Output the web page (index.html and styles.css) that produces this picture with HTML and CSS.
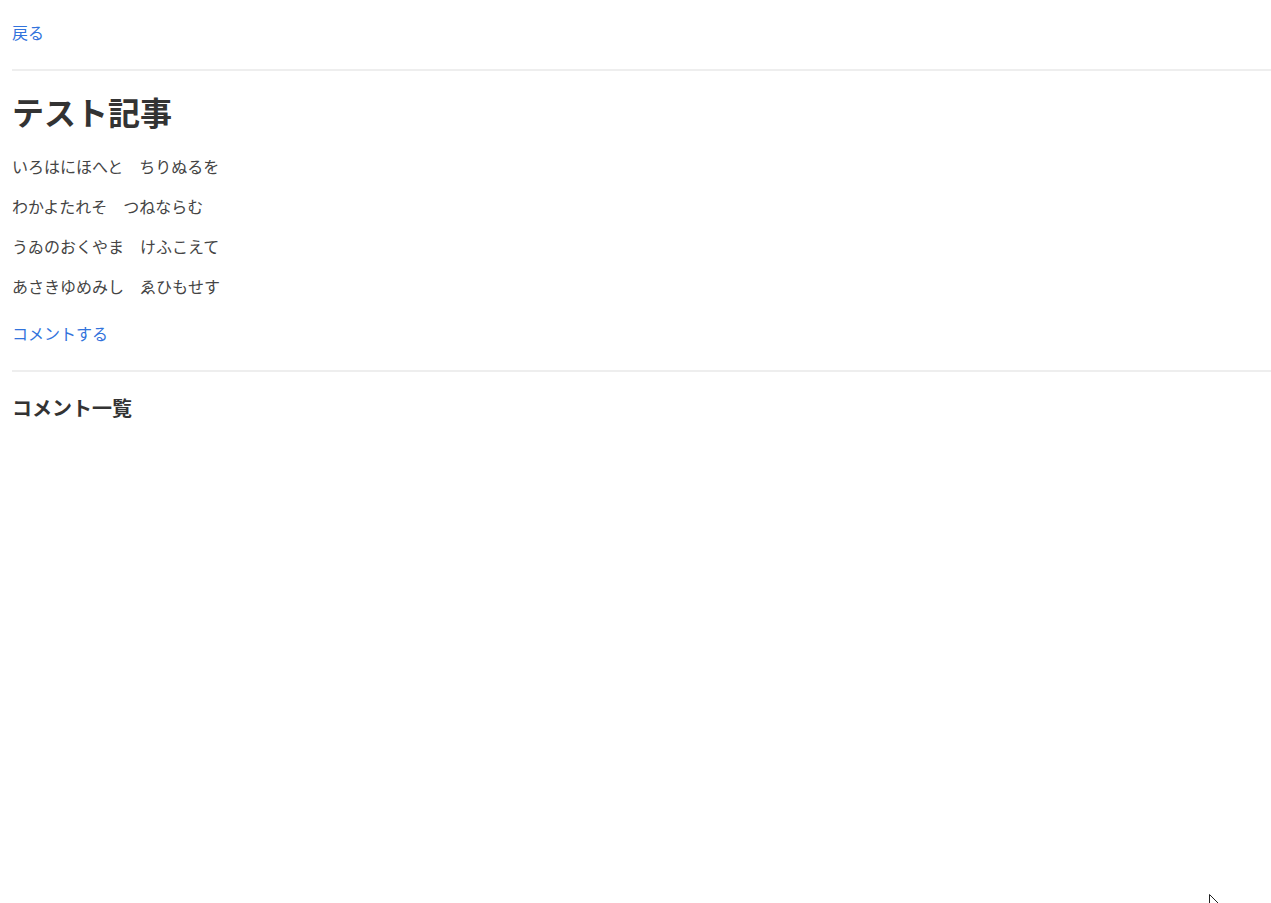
FILE: index.html
```html
<!DOCTYPE html>
<html lang="ja">
<head>
<meta charset="utf-8">
<title>テスト記事</title>
<link rel="stylesheet" href="styles.css">
</head>
<body>
<div class="page">
  <nav class="nav"><a href="#" class="link">戻る</a></nav>
  <hr class="rule">
  <article class="article">
    <h1 class="title">テスト記事</h1>
    <p class="text">いろはにほへと　ちりぬるを</p>
    <p class="text">わかよたれそ　つねならむ</p>
    <p class="text">うゐのおくやま　けふこえて</p>
    <p class="text">あさきゆめみし　ゑひもせす</p>
    <p class="action"><a href="#" class="link">コメントする</a></p>
  </article>
  <hr class="rule">
  <section class="comments">
    <h2 class="subtitle">コメント一覧</h2>
  </section>
</div>
<svg class="cursor" width="12" height="12" viewBox="0 0 12 12"><path d="M0.5 0.5 V11 M0.5 0.5 L10 10" stroke="#222" stroke-width="1" fill="none"/></svg>
</body>
</html>
```

FILE: styles.css
```css
html, body {
  margin: 0;
  padding: 0;
  background: #fff;
}
body {
  font-family: "Noto Sans CJK JP", "Noto Sans", sans-serif;
  font-size: 16px;
  line-height: 24px;
  color: #333;
}
.page {
  padding: 20px 0 0 12px;
}
.nav {
  height: 24px;
}
.link {
  color: #3273dc;
  text-decoration: none;
}
.rule {
  border: 0;
  height: 2px;
  background: #eeeeee;
  margin: 25px 0 0 0;
}
.article {
  padding: 21px 0 0 0;
}
.title {
  margin: 0 0 24px 0;
  font-size: 32px;
  line-height: 38px;
  font-weight: 700;
}
.text {
  margin: 0 0 16px 0;
  color: #444;
}
.action {
  margin: 23px 0 0 0;
}
.comments {
  padding-top: 24px;
}
.subtitle {
  margin: 0;
  font-size: 20px;
  line-height: 24px;
  font-weight: 700;
}
.cursor {
  position: fixed;
  left: 1209px;
  top: 894px;
}
```
